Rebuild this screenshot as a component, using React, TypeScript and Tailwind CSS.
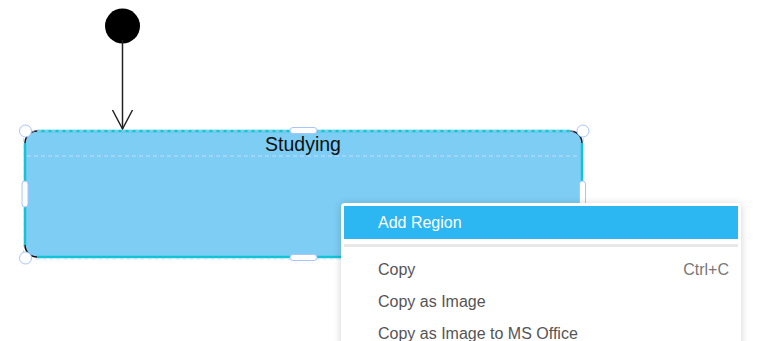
export default function App() {
  const menuItems = [
    { label: 'Copy', shortcut: 'Ctrl+C' },
    { label: 'Copy as Image', shortcut: '' },
    { label: 'Copy as Image to MS Office', shortcut: '' },
  ];

  return (
    <div className="relative w-[768px] h-[341px] overflow-hidden bg-white font-['Liberation_Sans',Arial,sans-serif]">
      {/* diagram canvas */}
      <svg className="absolute inset-0" width="768" height="341" viewBox="0 0 768 341">
        {/* initial node + transition */}
        <circle cx="122.5" cy="26" r="17.5" fill="#000" />
        <line x1="122.5" y1="40" x2="122.5" y2="129" stroke="#222" strokeWidth="1.5" />
        <polyline points="112.5,110 122.5,129 132.5,110" fill="none" stroke="#222" strokeWidth="1.5" />

        {/* state */}
        <rect x="25" y="131" width="557" height="126" rx="12" fill="#7dcdf4" stroke="#111" strokeWidth="1.5" />
        <line x1="37" y1="131" x2="570" y2="131" stroke="#12c4d6" strokeWidth="2.5" />
        <line x1="37" y1="257" x2="570" y2="257" stroke="#12c4d6" strokeWidth="2.5" />
        <line x1="25" y1="143" x2="25" y2="245" stroke="#12c4d6" strokeWidth="2.5" />
        <line x1="582" y1="143" x2="582" y2="245" stroke="#12c4d6" strokeWidth="2.5" />
        <line x1="27" y1="156" x2="580" y2="156" stroke="#c9d9f7" strokeWidth="1" strokeDasharray="4 3" />
        <rect x="23.5" y="131" width="560" height="128" fill="none" stroke="#cddcfb" strokeWidth="1" strokeDasharray="4 3" />
        <text x="303" y="151" textAnchor="middle" fontSize="19.5" fill="#111" fontFamily="Liberation Sans, Arial, sans-serif">
          Studying
        </text>

        {/* selection handles */}
        <circle cx="25.5" cy="131" r="6" fill="#fff" stroke="#a9c6fb" strokeWidth="1" />
        <circle cx="583" cy="131" r="6" fill="#fff" stroke="#a9c6fb" strokeWidth="1" />
        <circle cx="25.5" cy="258" r="6" fill="#fff" stroke="#a9c6fb" strokeWidth="1" />
        <rect x="290" y="127.5" width="27" height="6" rx="3" fill="#fff" stroke="#a9c6fb" strokeWidth="1" />
        <rect x="290" y="254.5" width="27" height="6" rx="3" fill="#fff" stroke="#a9c6fb" strokeWidth="1" />
        <rect x="22" y="181" width="6" height="26" rx="3" fill="#fff" stroke="#a9c6fb" strokeWidth="1" />
        <rect x="579.5" y="181" width="6" height="26" rx="3" fill="#fff" stroke="#a9c6fb" strokeWidth="1" />
      </svg>

      {/* context menu */}
      <div className="absolute left-[341px] top-[203px] w-[400px] rounded-[4px] bg-white p-[3px] shadow-[0_1px_8px_rgba(0,0,0,0.18)]">
        <div className="flex h-[33px] items-center bg-[#2cb6f2] pl-[34px] text-[16px] text-white">Add Region</div>
        <div className="mt-[5px] mb-[7px] h-[3px] bg-[#e8e8e8]" />
        {menuItems.map((item) => (
          <div key={item.label} className="flex h-[32px] items-center justify-between pl-[34px] pr-[9px] text-[16px] text-[#555]">
            <span>{item.label}</span>
            {item.shortcut && <span className="text-[#777]">{item.shortcut}</span>}
          </div>
        ))}
      </div>
    </div>
  );
}
